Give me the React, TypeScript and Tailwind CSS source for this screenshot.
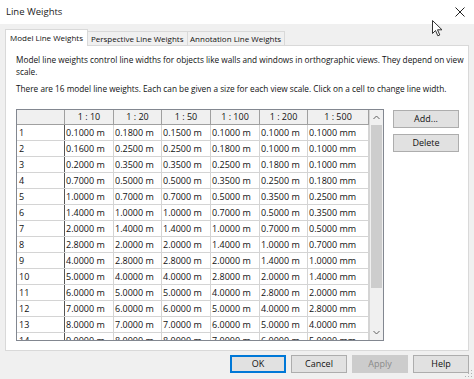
import React from 'react';

const scales = ['1 : 10', '1 : 20', '1 : 50', '1 : 100', '1 : 200', '1 : 500'];

const rows: string[][] = [
  ['0.1000 m', '0.1800 m', '0.1500 m', '0.1000 m', '0.1000 m', '0.1000 mm'],
  ['0.1600 m', '0.2500 m', '0.2500 m', '0.1800 m', '0.1000 m', '0.1000 mm'],
  ['0.2000 m', '0.3500 m', '0.3500 m', '0.2500 m', '0.1800 m', '0.1000 mm'],
  ['0.7000 m', '0.5000 m', '0.5000 m', '0.3500 m', '0.2500 m', '0.1800 mm'],
  ['1.0000 m', '0.7000 m', '0.7000 m', '0.5000 m', '0.3500 m', '0.2500 mm'],
  ['1.4000 m', '1.0000 m', '1.0000 m', '0.7000 m', '0.5000 m', '0.3500 mm'],
  ['2.0000 m', '1.4000 m', '1.4000 m', '1.0000 m', '0.7000 m', '0.5000 mm'],
  ['2.8000 m', '2.0000 m', '2.0000 m', '1.4000 m', '1.0000 m', '0.7000 mm'],
  ['4.0000 m', '2.8000 m', '2.8000 m', '2.0000 m', '1.4000 m', '1.0000 mm'],
  ['5.0000 m', '4.0000 m', '4.0000 m', '2.8000 m', '2.0000 m', '1.4000 mm'],
  ['6.0000 m', '5.0000 m', '5.0000 m', '4.0000 m', '2.8000 m', '2.0000 mm'],
  ['7.0000 m', '6.0000 m', '6.0000 m', '5.0000 m', '4.0000 m', '2.8000 mm'],
  ['8.0000 m', '7.0000 m', '7.0000 m', '6.0000 m', '5.0000 m', '4.0000 mm'],
  ['9.0000 m', '8.0000 m', '8.0000 m', '7.0000 m', '6.0000 m', '5.0000 mm'],
];

const colW = ['w-[49px]', 'w-[48px]', 'w-[49px]', 'w-[49px]', 'w-[48px]', 'w-[61px]'];

const DialogButton: React.FC<{ label: string; focused?: boolean; disabled?: boolean; className?: string }> = ({
  label,
  focused,
  disabled,
  className = '',
}) => (
  <button
    type="button"
    className={`h-[18px] flex items-center justify-center text-[9px] ${
      focused
        ? 'border-2 border-[#0078d7] bg-[#e1e1e1] text-[#111]'
        : disabled
        ? 'border border-[#cccccc] bg-[#cccccc] text-[#8a8a8a]'
        : 'border border-[#adadad] bg-[#e1e1e1] text-[#111]'
    } ${className}`}
  >
    {label}
  </button>
);

export default function App() {
  return (
    <div
      className="relative w-[474px] h-[379px] bg-[#f0f0f0] overflow-hidden text-[#111]"
      style={{ fontFamily: '"Open Sans", "Noto Sans", sans-serif' }}
    >
      {/* title bar */}
      <div className="h-[24px] bg-white flex items-center justify-between pl-[6px] pr-[8px]">
        <span className="text-[9.5px] text-[#222]">Line Weights</span>
        <svg width="10" height="10" viewBox="0 0 10 10" className="mr-[1px]">
          <path d="M0.5 0.5 L9.5 9.5 M9.5 0.5 L0.5 9.5" stroke="#222" strokeWidth="1" />
        </svg>
      </div>

      {/* tabs */}
      <div className="flex items-end h-[21px] pl-[5px] pt-[4px]">
        <div className="h-[17px] px-[4px] bg-white border border-b-0 border-[#d9d9d9] text-[8px] flex items-center relative top-[1px] z-10">
          Model Line Weights
        </div>
        <div className="h-[14px] px-[3px] bg-[#f0f0f0] border border-l-0 border-b-0 border-[#d9d9d9] text-[8px] flex items-center">
          Perspective Line Weights
        </div>
        <div className="h-[14px] px-[2.5px] bg-[#f0f0f0] border border-l-0 border-b-0 border-[#d9d9d9] text-[8px] flex items-center">
          Annotation Line Weights
        </div>
      </div>

      {/* panel */}
      <div className="mx-[5px] h-[306px] bg-white border border-[#d9d9d9] pl-[10px] pr-[3px] pt-[8px]">
        <p className="text-[8.25px] leading-[12px]">
          Model line weights control line widths for objects like walls and windows in orthographic views. They depend on view scale.
        </p>
        <p className="text-[8.25px] leading-[12px] mt-[5px]">
          There are 16 model line weights. Each can be given a size for each view scale. Click on a cell to change line width.
        </p>

        <div className="flex mt-[14px]">
          {/* grid */}
          <div className="flex shrink-0 border border-[#828790] h-[232px] overflow-hidden">
            <div className="flex flex-col text-[9px]">
              <div className="flex h-[15px] shrink-0 bg-[#f0f0f0] border-b border-[#a0a0a0]">
                <div className="w-[48px] border-r border-[#a0a0a0]" />
                {scales.map((s, i) => (
                  <div
                    key={s}
                    className={`${colW[i]} flex items-center justify-center border-r border-[#a0a0a0]`}
                  >
                    {s}
                  </div>
                ))}
              </div>
              {rows.map((r, ri) => (
                <div key={ri} className="flex h-[16px] shrink-0 border-b border-[#d4d4d4]">
                  <div className="w-[48px] pl-[2px] flex items-center border-r border-[#555]">{ri + 1}</div>
                  {r.map((v, ci) => (
                    <div
                      key={ci}
                      className={`${colW[ci]} pl-[1px] flex items-center border-r border-[#d4d4d4] whitespace-nowrap`}
                    >
                      {v}
                    </div>
                  ))}
                </div>
              ))}
            </div>
            {/* scrollbar */}
            <div className="w-[14px] shrink-0 bg-[#f0f0f0] border-l border-[#d4d4d4] flex flex-col">
              <div className="h-[15px] flex items-center justify-center">
                <svg width="7" height="5" viewBox="0 0 7 5">
                  <path d="M0.5 4 L3.5 1 L6.5 4" fill="none" stroke="#606060" strokeWidth="1" />
                </svg>
              </div>
              <div className="mx-[1px] h-[163px] bg-[#cdcdcd]" />
              <div className="flex-1" />
              <div className="h-[15px] flex items-center justify-center">
                <svg width="7" height="5" viewBox="0 0 7 5">
                  <path d="M0.5 1 L3.5 4 L6.5 1" fill="none" stroke="#606060" strokeWidth="1" />
                </svg>
              </div>
            </div>
          </div>

          {/* side buttons */}
          <div className="flex flex-col gap-[6px] ml-[9px] pt-[1px]">
            <DialogButton label="Add..." className="w-[66px] h-[17px]" />
            <DialogButton label="Delete" className="w-[66px] h-[17px]" />
          </div>
        </div>
      </div>

      {/* footer */}
      <div className="flex justify-end gap-[5px] pr-[5px] pt-[4px]">
        <DialogButton label="OK" focused className="w-[56px]" />
        <DialogButton label="Cancel" className="w-[56px]" />
        <DialogButton label="Apply" disabled className="w-[56px]" />
        <DialogButton label="Help" className="w-[56px]" />
      </div>

      {/* mouse cursor */}
      <svg className="absolute left-[432px] top-[20px]" width="11" height="17" viewBox="0 0 11 17">
        <path d="M0.5 0.5 L0.5 13.5 L3.5 10.5 L5.8 15.8 L7.8 15 L5.5 9.8 L10 9.8 Z" fill="white" stroke="#333" strokeWidth="1" />
      </svg>

      {/* resize grip */}
      <svg className="absolute right-[1px] bottom-[1px]" width="8" height="8" viewBox="0 0 8 8">
        <rect x="6" y="6" width="1" height="1" fill="#b0b0b0" />
        <rect x="3" y="6" width="1" height="1" fill="#b0b0b0" />
        <rect x="6" y="3" width="1" height="1" fill="#b0b0b0" />
        <rect x="0" y="6" width="1" height="1" fill="#b0b0b0" />
        <rect x="3" y="3" width="1" height="1" fill="#b0b0b0" />
        <rect x="6" y="0" width="1" height="1" fill="#b0b0b0" />
      </svg>
    </div>
  );
}
